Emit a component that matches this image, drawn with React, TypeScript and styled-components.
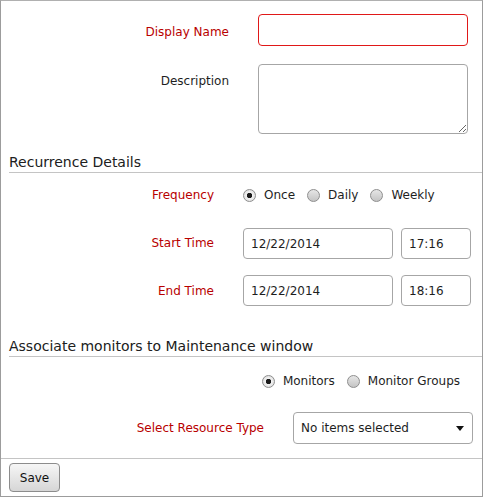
import styled, { createGlobalStyle } from 'styled-components';

const GlobalStyle = createGlobalStyle`
  html, body {
    margin: 0;
    padding: 0;
    background: #ffffff;
  }
  * {
    box-sizing: border-box;
  }
`;

const COLORS = {
  text: '#1e1e1e',
  required: '#b80000',
  border: '#a6a6a6',
  rule: '#c4c4c4',
  frame: '#9c9c9c',
};

const Frame = styled.div`
  width: 483px;
  height: 497px;
  border: 1px solid ${COLORS.frame};
  border-top-color: #b0b0b0;
  font-family: 'DejaVu Sans', Verdana, sans-serif;
  font-size: 12px;
  color: ${COLORS.text};
  display: flex;
  flex-direction: column;
`;

const FieldGrid = styled.div<{ $labelWidth: number; $top: number; $rowGap: number }>`
  display: grid;
  grid-template-columns: ${(p) => p.$labelWidth}px auto;
  column-gap: 29px;
  row-gap: ${(p) => p.$rowGap}px;
  align-items: center;
  padding-top: ${(p) => p.$top}px;
`;

const Label = styled.label<{ $required?: boolean; $top?: boolean; $offset?: number }>`
  text-align: right;
  line-height: 15px;
  color: ${(p) => (p.$required ? COLORS.required : COLORS.text)};
  align-self: ${(p) => (p.$top ? 'start' : 'center')};
  padding-top: ${(p) => (p.$top ? '10px' : `${p.$offset ?? 0}px`)};
`;

const TextInput = styled.input<{ $width: number; $height?: number; $invalid?: boolean }>`
  width: ${(p) => p.$width}px;
  height: ${(p) => p.$height ?? 31}px;
  border: 1px solid ${(p) => (p.$invalid ? '#e01818' : COLORS.border)};
  border-radius: 4px;
  padding: 0 7px;
  font-family: inherit;
  font-size: 12px;
  color: ${COLORS.text};
  outline: none;
  background: #fff;
`;

const TextArea = styled.textarea`
  width: 210px;
  height: 70px;
  border: 1px solid ${COLORS.border};
  border-radius: 4px;
  padding: 6px 7px;
  font-family: inherit;
  font-size: 12px;
  resize: both;
  outline: none;
  display: block;
`;

const SectionTitle = styled.h3<{ $top: number }>`
  margin: ${(p) => p.$top}px 0 0 8px;
  padding: 0 0 1px;
  font-size: 14px;
  font-weight: normal;
  line-height: 17px;
  color: #202020;
  border-bottom: 1px solid ${COLORS.rule};
`;

const RadioRow = styled.div<{ $align?: 'start' | 'end' }>`
  display: flex;
  align-items: center;
  justify-content: ${(p) => (p.$align === 'end' ? 'flex-end' : 'flex-start')};
  padding-right: ${(p) => (p.$align === 'end' ? '22px' : '0')};
  height: 16px;
`;

const RadioOption = styled.label`
  display: flex;
  align-items: center;
  margin-right: 12px;
  line-height: 15px;

  &:last-child {
    margin-right: 0;
  }
`;

const Radio = styled.input.attrs({ type: 'radio' })`
  appearance: none;
  width: 13px;
  height: 13px;
  margin: 0 8px 0 0;
  border-radius: 50%;
  border: 1px solid #8e8e8e;
  background: linear-gradient(#e6e6e6, #c4c4c4);

  &:checked {
    background: radial-gradient(circle, #1c1c1c 0 2.4px, #f2f2f2 3px, #d4d4d4 100%);
  }
`;

const TimePair = styled.div<{ $top?: number }>`
  display: flex;
  gap: 8px;
  margin-top: ${(p) => p.$top ?? 0}px;
`;

const StackRow = styled.div<{ $top: number }>`
  padding-top: ${(p) => p.$top}px;
`;

const Select = styled.div`
  width: 180px;
  height: 32px;
  border: 1px solid ${COLORS.border};
  border-radius: 4px;
  display: flex;
  align-items: center;
  justify-content: space-between;
  padding: 0 8px 0 7px;
  background: #fff;
`;

const Caret = styled.span`
  width: 0;
  height: 0;
  border-left: 4px solid transparent;
  border-right: 4px solid transparent;
  border-top: 5px solid #111;
`;

const Footer = styled.div`
  margin-top: 14px;
  border-top: 1px solid ${COLORS.rule};
  padding: 4px 8px 0;
`;

const Button = styled.button`
  width: 51px;
  height: 29px;
  border: 1px solid #8c8c8c;
  border-radius: 4px;
  background: linear-gradient(#f6f6f6, #d6d6d6);
  font-family: inherit;
  font-size: 12px;
  color: #111;
  padding: 0;
`;

export default function App() {
  return (
    <>
      <GlobalStyle />
      <Frame>
        <FieldGrid $labelWidth={228} $top={13} $rowGap={18}>
          <Label $required $offset={4}>Display Name</Label>
          <TextInput $width={210} $height={32} $invalid />
          <Label $top>Description</Label>
          <TextArea />
        </FieldGrid>

        <SectionTitle $top={20}>Recurrence Details</SectionTitle>

        <FieldGrid $labelWidth={213} $top={14} $rowGap={16}>
          <Label $required>Frequency</Label>
          <RadioRow>
            <RadioOption>
              <Radio name="freq" defaultChecked />
              Once
            </RadioOption>
            <RadioOption>
              <Radio name="freq" />
              Daily
            </RadioOption>
            <RadioOption>
              <Radio name="freq" />
              Weekly
            </RadioOption>
          </RadioRow>
          <Label $required $offset={9}>Start Time</Label>
          <TimePair $top={9}>
            <TextInput $width={150} defaultValue="12/22/2014" />
            <TextInput $width={70} defaultValue="17:16" />
          </TimePair>
          <Label $required $offset={1}>End Time</Label>
          <TimePair>
            <TextInput $width={150} defaultValue="12/22/2014" />
            <TextInput $width={70} defaultValue="18:16" />
          </TimePair>
        </FieldGrid>

        <SectionTitle $top={32}>Associate monitors to Maintenance window</SectionTitle>

        <StackRow $top={16}>
          <RadioRow $align="end">
            <RadioOption>
              <Radio name="assoc" defaultChecked />
              Monitors
            </RadioOption>
            <RadioOption>
              <Radio name="assoc" />
              Monitor Groups
            </RadioOption>
          </RadioRow>
        </StackRow>

        <FieldGrid $labelWidth={263} $top={23} $rowGap={0}>
          <Label $required>Select Resource Type</Label>
          <Select>
            <span>No items selected</span>
            <Caret />
          </Select>
        </FieldGrid>

        <Footer>
          <Button>Save</Button>
        </Footer>
      </Frame>
    </>
  );
}
